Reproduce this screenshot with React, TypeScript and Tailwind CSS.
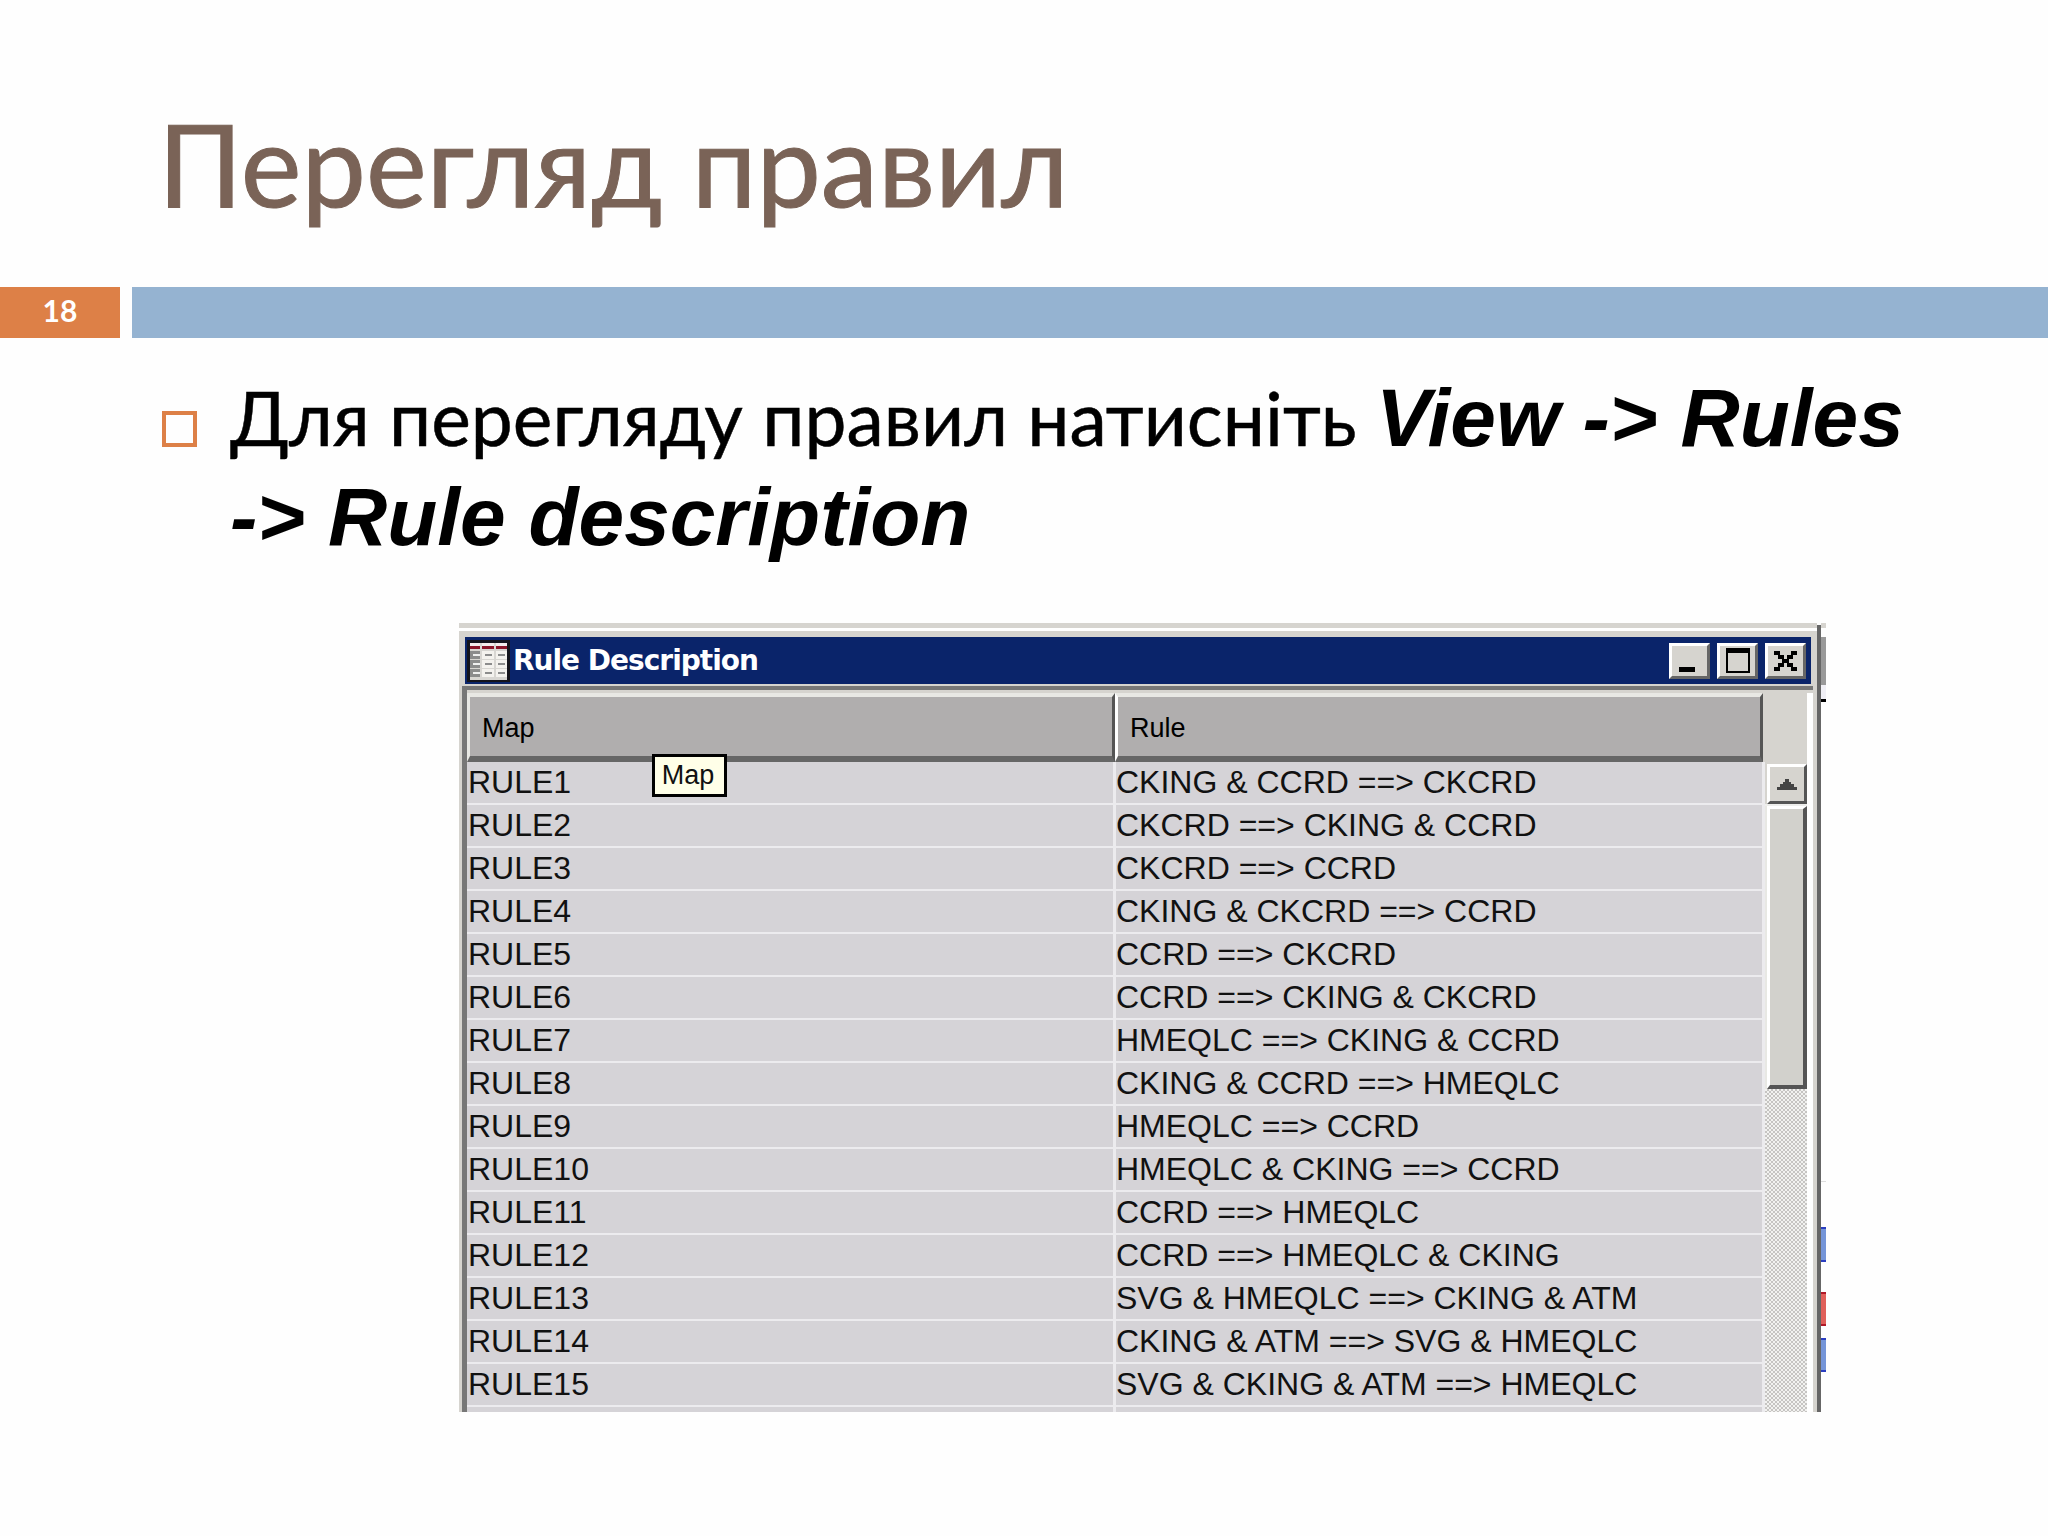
const rules = [
  ['RULE1', 'CKING & CCRD ==> CKCRD'],
  ['RULE2', 'CKCRD ==> CKING & CCRD'],
  ['RULE3', 'CKCRD ==> CCRD'],
  ['RULE4', 'CKING & CKCRD ==> CCRD'],
  ['RULE5', 'CCRD ==> CKCRD'],
  ['RULE6', 'CCRD ==> CKING & CKCRD'],
  ['RULE7', 'HMEQLC ==> CKING & CCRD'],
  ['RULE8', 'CKING & CCRD ==> HMEQLC'],
  ['RULE9', 'HMEQLC ==> CCRD'],
  ['RULE10', 'HMEQLC & CKING ==> CCRD'],
  ['RULE11', 'CCRD ==> HMEQLC'],
  ['RULE12', 'CCRD ==> HMEQLC & CKING'],
  ['RULE13', 'SVG & HMEQLC ==> CKING & ATM'],
  ['RULE14', 'CKING & ATM ==> SVG & HMEQLC'],
  ['RULE15', 'SVG & CKING & ATM ==> HMEQLC'],
  ['', ''],
];

function TableIcon() {
  const cols = [
    { x: 3, w: 10, bg: '#8c8c8c', dash: '#f0f0f0', dx: 3, dw: 7 },
    { x: 15, w: 12, bg: '#f4f2ee', dash: '#8c8c8c', dx: 3, dw: 7 },
    { x: 29, w: 11, bg: '#f4f2ee', dash: '#8c8c8c', dx: 2, dw: 7 },
  ];
  return (
    <svg width="43" height="42" viewBox="0 0 43 42" className="shrink-0">
      <rect width="43" height="42" fill="#14141c" />
      <rect x="3" y="3" width="37" height="37" fill="#d8d6d2" />
      {cols.map((c) => (
        <g key={c.x}>
          <rect x={c.x} y="3" width={c.w} height="3" fill="#f2ecec" />
          <rect x={c.x} y="6" width={c.w} height="3" fill="#8a1528" />
          {[11, 20, 29].map((y) => (
            <g key={y}>
              <rect x={c.x} y={y} width={c.w} height="8" fill={c.bg} />
              <rect x={c.x + c.dx} y={y + 3} width={c.dw} height="2" fill={c.dash} />
            </g>
          ))}
        </g>
      ))}
    </svg>
  );
}

function WinButton({ children }: { children: React.ReactNode }) {
  return (
    <div className="w-[41px] h-[36px] bg-[#d6d4cf] border-t-[3px] border-l-[3px] border-t-white border-l-white border-r-[3px] border-b-[3px] border-r-[#666] border-b-[#666] flex items-center justify-center shrink-0">
      {children}
    </div>
  );
}

export default function App() {
  return (
    <div className="w-[2048px] h-[1536px] bg-[#fefefe] overflow-hidden flex flex-col font-['Liberation_Sans',sans-serif]">
      <div className="h-[287px] pl-[158px] pt-[97px] shrink-0">
        <h1 className="font-['Lato','Noto_Sans',sans-serif] text-[#7a6357] text-[115px] leading-[130px] font-normal [-webkit-text-stroke:1px_#7a6357]">
          Перегляд правил
        </h1>
      </div>

      <div className="flex h-[51px] shrink-0">
        <div className="w-[120px] bg-[#dd8047] flex items-center justify-center pb-[5px] font-['Lato','Noto_Sans',sans-serif] text-white font-bold text-[30px]">
          18
        </div>
        <div className="flex-1 ml-[12px] bg-[#95b3d1]" />
      </div>

      <div className="flex pl-[162px] pt-[30px] shrink-0 text-black">
        <div className="w-[35px] h-[36px] mt-[43px] border-[4px] border-[#dd8047] shrink-0" />
        <p className="ml-[33px] w-[1720px] text-[75px] leading-[98px] font-['Lato','Noto_Sans',sans-serif] [-webkit-text-stroke:0.5px_#000]">
          Для перегляду правил натисніть{' '}
          <span className="font-['Liberation_Sans',sans-serif] font-bold italic text-[82px] [-webkit-text-stroke:0px]">View -&gt; Rules -&gt; Rule description</span>
        </p>
      </div>

      <div className="relative ml-[459px] mt-[57px] w-[1367px] h-[789px] flex shrink-0 overflow-hidden">
        <div className="w-[1358px] flex flex-col">
          <div className="h-[5px] bg-[#d6d4cf] shrink-0" />
          <div className="h-[3px] bg-white shrink-0" />
          <div className="h-[6px] bg-[#d6d4cf] shrink-0" />

          <div className="bg-[#d6d4cf] px-[6px] pb-[2px] shrink-0">
            <div className="h-[47px] bg-[#0a246a] flex items-center pl-[2px] pr-[5px]">
              <TableIcon />
              <span className="ml-[3px] text-white font-bold text-[28px] font-['DejaVu_Sans',sans-serif] tracking-[-1px]">Rule Description</span>
              <div className="ml-auto flex gap-[7px]">
                <WinButton>
                  <div className="w-[16px] h-[5px] bg-black self-end mb-[4px] mr-[6px]" />
                </WinButton>
                <WinButton>
                  <div className="w-[24px] h-[25px] border-[2px] border-t-[5px] border-black" />
                </WinButton>
                <WinButton>
                  <svg width="23" height="20" viewBox="0 0 23 20" shapeRendering="crispEdges">
                    <path d="M0 0h6v4H0z M17 0h6v4h-6z M4 4h6v4H4z M13 4h6v4h-6z M8 8h7v4H8z M4 12h6v4H4z M13 12h6v4h-6z M0 16h6v4H0z M17 16h6v4h-6z" fill="#000" />
                  </svg>
                </WinButton>
              </div>
            </div>
          </div>

          <div className="flex-1 min-h-0 bg-[#d6d4cf] pl-[3px] pr-[4px] flex flex-col">
            <div className="flex-1 min-h-0 border-l-[5px] border-t-[4px] border-[#777] pt-[3px] bg-[#d6d4cf] flex relative">
              <div className="w-[1298px] flex flex-col shrink-0 overflow-hidden">
                <div className="flex h-[69px] shrink-0 text-black text-[27px]">
                  <div className="w-[648px] bg-[#b0aeae] border-t-[4px] border-l-[3px] border-t-[#e8e8e4] border-l-[#e8e8e4] border-r-[3px] border-r-[#555] border-b-[6px] border-b-[#666] pl-[12px] pt-[3px] flex items-center">
                    Map
                  </div>
                  <div className="w-[648px] bg-[#b0aeae] border-t-[4px] border-l-[3px] border-t-[#e8e8e4] border-l-white border-r-[3px] border-r-[#555] border-b-[6px] border-b-[#666] pl-[12px] pt-[3px] flex items-center">
                    Rule
                  </div>
                </div>
                {rules.map(([name, rule], i) => (
                  <div key={i} className="flex h-[43px] shrink-0 border-b-[2px] border-[#ecebee] text-[32px] leading-[41px] text-[#111] bg-[#ecebee]">
                    <div className="w-[646px] pl-[1px] bg-[#d5d3d7] shrink-0">{name}</div>
                    <div className="w-[646px] ml-[3px] bg-[#d5d3d7] shrink-0">{rule}</div>
                  </div>
                ))}
              </div>

              <div className="w-[48px] bg-white shrink-0 flex flex-col">
                <div className="w-[42px] flex-1 flex flex-col">
                  <div className="h-[71px] bg-[#d6d4cf] shrink-0" />
                  <div className="h-[40px] pl-[2px] bg-[#d6d4cf] shrink-0">
                    <div className="h-full bg-[#d6d4cf] border-t-[3px] border-l-[3px] border-t-white border-l-white border-r-[3px] border-r-[#555] border-b-[3px] border-b-[#555] flex items-center justify-center">
                      <svg width="20" height="11" viewBox="0 0 20 11">
                        <path d="M0 11 V8 H3 V5 H6 V3 H8 V0 H12 V3 H14 V5 H17 V8 H20 V11 Z" fill="#444" />
                      </svg>
                    </div>
                  </div>
                  <div className="h-[2px] bg-[#eeeeec] shrink-0" />
                  <div className="h-[283px] pl-[2px] bg-[#e8e8e4] shrink-0">
                    <div className="h-full bg-[#d2d1cc] border-t-[3px] border-l-[3px] border-t-white border-l-white border-r-[4px] border-r-[#555] border-b-[4px] border-b-[#555]" />
                  </div>
                  <div className="flex-1 bg-[repeating-conic-gradient(#c6c4c2_0_25%,#f2f2f0_0_50%)] bg-[length:4px_4px]" />
                </div>
              </div>
            </div>
          </div>
        </div>

        <div className="w-[4px] mt-[2px] bg-[#666] shrink-0" />

        <div className="w-[5px] flex flex-col shrink-0">
          <div className="h-[5px] bg-[#d6d4cf] shrink-0" />
          <div className="h-[9px] shrink-0" />
          <div className="h-[48px] bg-[#999] shrink-0" />
          <div className="h-[14px] bg-[#f0eff5] shrink-0" />
          <div className="h-[3px] bg-black shrink-0" />
          <div className="h-[479px] shrink-0" />
          <div className="h-[1px] bg-[#ddd] shrink-0" />
          <div className="h-[45px] shrink-0" />
          <div className="h-[35px] bg-[#7595d8] border-y-[2px] border-[#2a3ec0] shrink-0" />
          <div className="h-[30px] shrink-0" />
          <div className="h-[34px] bg-[#e0605a] border-y-[2px] border-[#b01828] shrink-0" />
          <div className="h-[12px] shrink-0" />
          <div className="h-[34px] bg-[#7595d8] border-y-[2px] border-[#2a3ec0] shrink-0" />
        </div>

        <div className="absolute left-[193px] top-[131px] w-[75px] h-[43px] pr-[3px] border-[3px] border-black bg-[#ffffe8] text-[27px] text-[#111] flex items-center justify-center">
          Map
        </div>
      </div>
    </div>
  );
}
